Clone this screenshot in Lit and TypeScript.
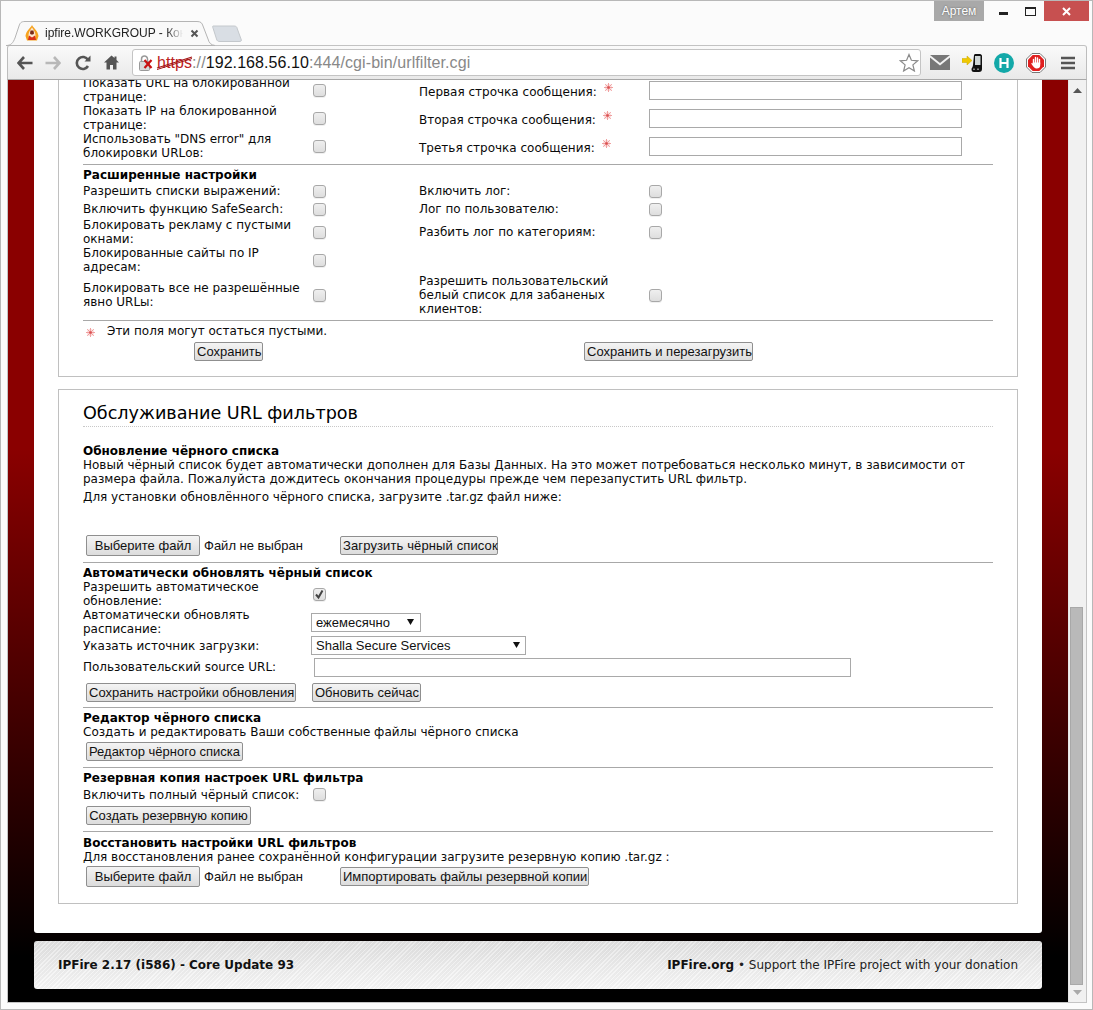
import { LitElement, html, css } from "lit";
import { customElement } from "lit/decorators.js";

const star = html`<svg class="star" width="9" height="9" viewBox="0 0 9 9"><circle cx="4.500" cy="4.500" r="3.600" fill="#fbdcdc"/><g stroke="#f0a0a0" stroke-width="1"><path d="M4.500 0v9M0 4.500h9M1.200 1.200l6.600 6.600M7.800 1.200L1.200 7.800"/></g><circle cx="4.500" cy="4.500" r="1.300" fill="#d85050"/></svg>`;

const cb = (checked = false) => html`<span class="cb" role="checkbox" aria-checked=${checked ? "true" : "false"}>${checked ? html`<svg width="11" height="11" viewBox="0 0 11 11"><path d="M2 5.500l2.500 3L8.500 1.500" fill="none" stroke="#444" stroke-width="2"/></svg>` : ""}</span>`;

@customElement("app-root")
export class AppRoot extends LitElement {
  static styles = css`
    :host { display: block; width: 1093px; height: 1010px; overflow: hidden; background: #fbfbfb; font-family: "DejaVu Sans", sans-serif; }
    * { box-sizing: border-box; }
    .window { width: 1093px; height: 1010px; border: 1px solid #b8b8b8; padding: 0 5px 6px 6px; display: flex; flex-direction: column; background: #fbfbfb; }
    .titlebar { height: 20px; flex: none; display: flex; justify-content: flex-end; align-items: flex-start; margin-right: -2px; }
    .user { width: 50px; height: 20px; background: #a9a9a9; color: #fff; font: 12px "Liberation Sans", sans-serif; display: flex; align-items: center; justify-content: center; text-shadow: 0 0 2px #555; margin-right: 6px; }
    .wbtn { width: 27px; height: 20px; display: flex; align-items: center; justify-content: center; }
    .wclose { width: 45px; height: 20px; background: #c75050; display: flex; align-items: center; justify-content: center; }
    .tabs { height: 24px; flex: none; display: flex; position: relative; z-index: 1; align-items: flex-start; }
    .tabshape { position: absolute; left: -1px; top: 0; }
    .tab { position: relative; width: 202px; height: 24px; margin-left: 4px; display: flex; align-items: center; padding: 0 0 0 13px; gap: 5px; }
    .tabtitle { width: 138px; overflow: hidden; white-space: nowrap; font: 12px "Liberation Sans", sans-serif; color: #222; -webkit-mask-image: linear-gradient(90deg, #000 88%, transparent 100%); mask-image: linear-gradient(90deg, #000 88%, transparent 100%); }
    .tabx { margin-left: 2px; }
    .newtab { margin: 4px 0 0 -1px; }
    .toolbar { height: 35px; flex: none; display: flex; align-items: center; padding: 0 0 0 9px; background: linear-gradient(#fafafa, #e9e9e9); border: 1px solid #bdbdbd; border-bottom-color: #a8a8a8; border-top-color: #c2c2c2; border-radius: 3px 3px 0 0; }
    .nav { width: 28px; height: 28px; flex: none; display: flex; align-items: center; justify-content: flex-start; }
    .nav.w30 { width: 30px; }
    .nav.w29 { width: 29px; }
    .omni { width: 789px; height: 27px; flex: none; display: flex; align-items: center; background: #fff; border: 1px solid #c4c4c4; border-radius: 3px; padding: 0 1px 0 2px; font: 16px "Liberation Sans", sans-serif; letter-spacing: 0.08px; color: #888; white-space: nowrap; }
    .url { margin-left: 4px; flex: 1; position: relative; }
    .https { color: #b22; position: relative; }
    .strike { position: absolute; left: -3px; top: -3px; }
    .host { color: #111; }
    .tools { display: flex; align-items: center; flex: none; margin-left: 3px; }
    .tool { width: 32px; height: 28px; display: flex; align-items: center; justify-content: center; }
    .viewport { flex: 1; min-height: 0; display: flex; overflow: hidden; border: 1px solid #c4c4c4; border-top: 0; }
    .page { width: 1060px; flex: none; padding: 0 26px; background: linear-gradient(#8a0000 0%, #8a0000 40%, #000 95%); height: 922px; overflow: hidden; }
    .main { display: flow-root; background: #fff; height: 853px; border-radius: 0 0 3px 3px; padding: 0 24px; font-size: 12px; line-height: 14px; color: #0a0a0a; }
    .card { display: flow-root; border: 1px solid #c0c0c0; padding: 0 24px; }
    .card.first { border-top: 0; height: 297px; }
    .first-inner { margin-top: -4px; }
    .card.second { margin-top: 12px; height: 515px; }
    .row { display: grid; grid-template-columns: 230px 106px 230px 1fr; align-items: center; }
    .r2 { grid-template-columns: 230px 1fr; }
    .h18 { height: 18px; } .h19 { height: 19px; } .h24 { height: 24px; } .h28 { height: 28px; } .h42 { height: 42px; }
    .lw { max-width: 222px; }
    .lw2 { max-width: 205px; }
    .low { padding-top: 3px; }
    .cb { display: block; width: 13px; height: 13px; background: linear-gradient(#efefef, #dedede); border: 1px solid #a8a8a8; border-radius: 3px; box-shadow: 0 1px 0 #f0f0f0; }
    .cb svg { display: block; }
    .star { margin-left: 7px; position: relative; top: -4px; vertical-align: baseline; }
    input.text { display: block; height: 19px; width: 313px; border: 1px solid #a9a9a9; background: #fff; padding: 0; margin: 0; }
    input.url-in { width: 537px; margin-left: 1px; }
    .sep { height: 1px; background: #a8a8a8; border: 0; margin: 0; }
    .m4 { margin-top: 4px; }
    .m5 { margin-top: 5px; }
    .m6 { margin-top: 6px; }
    h4 { font-size: 12px; line-height: 14px; font-weight: 700; margin: 3px 0 0; color: #000; }
    h4.t4 { margin-top: 4px; }
    .note { display: flex; align-items: center; height: 14px; margin-top: 3px; }
    .note .star { margin: 0 12px 0 3px; top: 1px; }
    .savebar { display: flex; margin-top: 4px; }
    button { font: 13px "Liberation Sans", sans-serif; height: 19px; padding: 0 2px; border: 1px solid #8f8f8f; border-radius: 2px; background: linear-gradient(#f4f4f4, #dcdcdc); color: #111; white-space: nowrap; margin: 0; }
    .save1 { margin-left: 111px; width: 69px; }
    .save2 { margin-left: 321px; width: 169px; }
    h3 { font-size: 17.6px; line-height: 22px; font-weight: 400; margin: 0; color: #000; }
    .title { padding-top: 12px; height: 37px; border-bottom: 1px dotted #c8c8c8; }
    h4.t1 { margin-top: 17px; }
    p { margin: 0; }
    .gap4 { margin-top: 4px; }
    .filebar { display: flex; align-items: center; height: 21px; margin: 31px 0 6px 3px; font: 13px "Liberation Sans", sans-serif; color: #111; }
    .filebar.last { margin: 2px 0 0 3px; }
    .filebtn { height: 21px; width: 114px; padding: 0; }
    .nofile { margin-left: 4px; width: 136px; }
    .up { width: 158px; letter-spacing: .12px; }
    .imp { width: 249px; }
    .selwrap { position: relative; display: block; height: 19px; }
    .selwrap svg { position: absolute; top: 6px; pointer-events: none; }
    .tri1 { left: 94px; }
    .tri2 { left: 200px; }
    select { appearance: none; -webkit-appearance: none; display: block; height: 19px; font: 13px "Liberation Sans", sans-serif; color: #111; background: #fff; border: 1px solid #a9a9a9; border-radius: 0; padding: 0 0 0 4px; margin-left: -2px; }
    .sel1 { width: 110px; }
    .sel2 { width: 215px; }
    .btnrow { display: flex; margin: 4px 0 0 3px; height: 19px; }
    .b-a { width: 210px; }
    .b-b { width: 109px; margin-left: 16px; }
    .b-c { margin: 3px 0 0 3px; display: block; width: 157px; }
    .b-d { margin: 2px 0 0 3px; display: block; width: 165px; }
    .scroll { width: 18px; flex: none; background: #f1f1f1; border-left: 1px solid #e6e6e6; position: relative; }
    .thumb { position: absolute; left: 1px; right: 3px; top: 527px; bottom: 17px; background: #b9b9b9; border: 1px solid #a8a8a8; }
    .arrow { position: absolute; left: 4px; }
    .a-up { top: 8px; }
    .a-down { bottom: 7px; }
    .foot { margin-top: 8px; height: 48px; border-radius: 3px; display: flex; align-items: center; justify-content: space-between; padding: 0 24px; font-size: 12px; color: #222; background: repeating-linear-gradient(135deg, rgba(255,255,255,.35) 0 1px, rgba(200,200,200,.12) 1px 3px), linear-gradient(#dedede, #f8f8f8); }
    .foot b { color: #111; font-weight: 700; }
  `;

  render() {
    return html`
    <div class="window">
      <div class="titlebar">
        <div class="user">Артем</div>
        <div class="wbtn"><svg width="9" height="8" viewBox="0 0 9 8"><rect y="5" width="9" height="3" fill="#222"/></svg></div>
        <div class="wbtn"><svg width="11" height="9" viewBox="0 0 11 9"><rect x=".5" y="1" width="10" height="7.500" fill="none" stroke="#222"/><rect width="11" height="2" fill="#222"/></svg></div>
        <div class="wclose"><svg width="10" height="9" viewBox="0 0 10 9"><path d="M1 1l7 7M8 1L1 8" stroke="#fff" stroke-width="2"/></svg></div>
      </div>
      <div class="tabs">
        <svg class="tabshape" width="210" height="25" viewBox="0 0 210 25"><path d="M0 24.500C5 24.500 7 22 9 17L13 5C14 2 15 .5 19 .5H191C195 .5 196 2 197 5L202 18C203 22 205 24 209 24.500Z" fill="#f9f9f9" stroke="#b4b4b4"/></svg>
        <div class="tab">
          <svg width="16" height="16" viewBox="0 0 16 16"><path d="M8 0C9.500 3 14 6 14.500 11L13 15.500H3L1.500 11C2 6 6.500 3 8 0Z" fill="#f6a21e"/><path d="M8 2.500C9.500 5 11.500 7 11.500 10L11 14H5L4.500 10C4.500 7 6.500 5 8 2.500Z" fill="#fbe6cf"/><path d="M6.500 5.500H9.500L10 8.500L9 9.500H7L6 8.500Z" fill="#7a2a1a"/><path d="M5 10.500L8 12.500L11 10.500L12 15H4Z" fill="#d7301a"/></svg>
          <span class="tabtitle">ipfire.WORKGROUP - Кон</span>
          <svg class="tabx" width="9" height="9" viewBox="0 0 9 9"><path d="M1.500 1.500l6 6M7.500 1.500l-6 6" stroke="#555" stroke-width="2"/></svg>
        </div>
        <svg class="newtab" width="31" height="18" viewBox="0 0 31 18"><path d="M1 1H22C24 1 25 2 25 3L29 14C30 16 29 16.500 27 16.500H8C6 16.500 5 16 4.500 14L1 3C.5 2 .5 1 1 1Z" fill="#d9dee4" stroke="#c4c8cc"/></svg>
      </div>
      <div class="toolbar">
        <div class="nav"><svg width="16" height="14" viewBox="0 0 16 14"><path d="M7 1L1.500 7L7 13M2 7H15.500" fill="none" stroke="#555" stroke-width="2.600"/></svg></div>
        <div class="nav w30"><svg width="16" height="14" viewBox="0 0 16 14"><path d="M9 1L14.500 7L9 13M14 7H.5" fill="none" stroke="#b8b8b8" stroke-width="2.600"/></svg></div>
        <div class="nav w29"><svg width="16" height="16" viewBox="0 0 16 16"><path d="M13 11A6 6 0 1 1 13 5" fill="none" stroke="#555" stroke-width="2.600"/><path d="M9.500 6.500H15.500V.5Z" fill="#555"/></svg></div>
        <div class="nav"><svg width="15" height="15" viewBox="0 0 15 15"><path d="M7.500 .5L0 7.500H2.500V14.500H6V10H9V14.500H12.500V7.500H15L12.500 5V1.500H10.500V3Z" fill="#555"/></svg></div>
        <div class="omni">
          <svg width="18" height="18" viewBox="0 0 18 18"><rect x="4.500" y="7.500" width="10" height="9" rx="1" fill="#d8d8d8" stroke="#999"/><path d="M6.500 7.500V5A3 3 0 0 1 12.500 5V7.500" fill="none" stroke="#999" stroke-width="1.500"/><path d="M9.500 6l7 8M16.500 6l-7 8" stroke="#c81010" stroke-width="2.200"/></svg>
          <span class="url"><span class="https">https<svg class="strike" width="40" height="22" viewBox="0 0 40 22"><path d="M3 17L38 6" stroke="#a31515" stroke-width="1.200"/><path d="M3 18.500L38 7.500" stroke="#a31515" stroke-width="1"/></svg></span>://<span class="host">192.168.56.10</span>:444/cgi-bin/urlfilter.cgi</span>
          <svg width="20" height="19" viewBox="0 0 20 19"><path d="M10 1.500L12.400 7.300L18.700 7.800L13.900 11.900L15.400 18L10 14.800L4.600 18L6.100 11.900L1.300 7.800L7.600 7.300Z" fill="#fff" stroke="#8a8a8a" stroke-width="1.200"/></svg>
        </div>
        <div class="tools">
          <div class="tool"><svg width="20" height="15" viewBox="0 0 20 15"><path d="M0 0H20L10 8Z" fill="#777"/><path d="M0 2.500L10 10.500L20 2.500V15H0Z" fill="#777"/></svg></div>
          <div class="tool"><svg width="20" height="18" viewBox="0 0 20 18"><path d="M0 4.500H5V2L10 6.500L5 11V8.500H0Z" fill="#f0c800" stroke="#c9a800" stroke-width=".5"/><path d="M12 1C12 .5 13 0 14 0H18C19 0 20 1 20 2V15C20 17 19 18 17 18H12C10 18 9.500 17 9.500 15C9.500 14 11 13 11 11Z" fill="#111"/><rect x="13" y="2" width="5.500" height="9" fill="#cfd6d6"/><rect x="11" y="14.500" width="2" height="1.500" fill="#888"/><rect x="15" y="14.500" width="2" height="1.500" fill="#888"/></svg></div>
          <div class="tool"><svg width="20" height="20" viewBox="0 0 20 20"><circle cx="10" cy="10" r="10" fill="#13a8a8"/><path d="M6.500 5V15M13.500 5V15M6.500 10H13.500" stroke="#fff" stroke-width="2.200" fill="none"/></svg></div>
          <div class="tool"><svg width="20" height="20" viewBox="0 0 20 20"><path d="M6 .5H14L19.500 6V14L14 19.500H6L.5 14V6Z" fill="#fff" stroke="#777"/><path d="M6.700 2H13.300L18 6.700V13.300L13.300 18H6.700L2 13.300V6.700Z" fill="#e01f1f"/><path d="M7.500 10V6.500M9.500 10V4.500M11.500 10V5M13.500 11V6.500" fill="none" stroke="#fff" stroke-width="1.400" stroke-linecap="round"/><path d="M6.800 9.500H14.200V12.500C14.200 14.500 13 15.500 10.800 15.500C8.800 15.500 8 14.500 5.500 11C5 10 6 9.500 6.800 10.500Z" fill="#fff"/></svg></div>
          <div class="tool"><svg width="14" height="14" viewBox="0 0 14 14"><path d="M0 2H14M0 7H14M0 12H14" stroke="#555" stroke-width="2.600"/></svg></div>
        </div>
      </div>
      <div class="viewport">
        <div class="page">
          <div class="main">
            <div class="card first">
              <div class="first-inner">
                <div class="row h28"><div class="lw">Показать URL на блокированной странице:</div>${cb()}<div class="low">Первая строчка сообщения:${star}</div><input class="text" /></div>
                <div class="row h28"><div class="lw">Показать IP на блокированной странице:</div>${cb()}<div class="low">Вторая строчка сообщения:${star}</div><input class="text" /></div>
                <div class="row h28"><div class="lw">Использовать "DNS error" для блокировки URLов:</div>${cb()}<div class="low">Третья строчка сообщения:${star}</div><input class="text" /></div>
              </div>
              <hr class="sep m4" />
              <h4>Расширенные настройки</h4>
              <div class="row h18"><div>Разрешить списки выражений:</div>${cb()}<div>Включить лог:</div>${cb()}</div>
              <div class="row h18"><div>Включить функцию SafeSearch:</div>${cb()}<div>Лог по пользователю:</div>${cb()}</div>
              <div class="row h28"><div class="lw">Блокировать рекламу с пустыми окнами:</div>${cb()}<div>Разбить лог по категориям:</div>${cb()}</div>
              <div class="row h28"><div class="lw">Блокированные сайты по IP адресам:</div>${cb()}<div></div><div></div></div>
              <div class="row h42"><div class="lw">Блокировать все не разрешённые явно URLы:</div>${cb()}<div class="lw2">Разрешить пользовательский белый список для забаненых клиентов:</div>${cb()}</div>
              <hr class="sep m4" />
              <div class="note">${star}<span>Эти поля могут остаться пустыми.</span></div>
              <div class="savebar"><button class="save1">Сохранить</button><button class="save2">Сохранить и перезагрузить</button></div>
            </div>
            <div class="card second">
              <div class="title"><h3>Обслуживание URL фильтров</h3></div>
              <h4 class="t1">Обновление чёрного списка</h4>
              <p>Новый чёрный список будет автоматически дополнен для Базы Данных. На это может потребоваться несколько минут, в зависимости от размера файла. Пожалуйста дождитесь окончания процедуры прежде чем перезапустить URL фильтр.</p>
              <p class="gap4">Для установки обновлённого чёрного списка, загрузите .tar.gz файл ниже:</p>
              <div class="filebar"><button class="filebtn">Выберите файл</button><span class="nofile">Файл не выбран</span><button class="up">Загрузить чёрный список</button></div>
              <hr class="sep" />
              <h4>Автоматически обновлять чёрный список</h4>
              <div class="r2 row h28"><div class="lw">Разрешить автоматическое обновление:</div>${cb(true)}</div>
              <div class="r2 row h28"><div class="lw">Автоматически обновлять расписание:</div><span class="selwrap"><select class="sel1"><option>ежемесячно</option></select><svg class="tri1" width="7" height="6" viewBox="0 0 7 6"><path d="M0 0H7L3.500 6Z" fill="#111"/></svg></span></div>
              <div class="r2 row h19"><div>Указать источник загрузки:</div><span class="selwrap"><select class="sel2"><option>Shalla Secure Services</option></select><svg class="tri2" width="7" height="6" viewBox="0 0 7 6"><path d="M0 0H7L3.500 6Z" fill="#111"/></svg></span></div>
              <div class="r2 row h24"><div>Пользовательский source URL:</div><input class="text url-in" /></div>
              <div class="btnrow"><button class="b-a">Сохранить настройки обновления</button><button class="b-b">Обновить сейчас</button></div>
              <hr class="sep m5" />
              <h4>Редактор чёрного списка</h4>
              <p>Создать и редактировать Ваши собственные файлы чёрного списка</p>
              <button class="b-c">Редактор чёрного списка</button>
              <hr class="sep m6" />
              <h4>Резервная копия настроек URL фильтра</h4>
              <div class="r2 row h19"><div>Включить полный чёрный список:</div>${cb()}</div>
              <button class="b-d">Создать резервную копию</button>
              <hr class="sep m6" />
              <h4 class="t4">Восстановить настройки URL фильтров</h4>
              <p>Для восстановления ранее сохранённой конфигурации загрузите резервную копию .tar.gz :</p>
              <div class="filebar last"><button class="filebtn">Выберите файл</button><span class="nofile">Файл не выбран</span><button class="imp">Импортировать файлы резервной копии</button></div>
            </div>
          </div>
          <div class="foot"><b>IPFire 2.17 (i586) - Core Update 93</b><span><b>IPFire.org</b> • Support the IPFire project with your donation</span></div>
        </div>
        <div class="scroll">
          <svg class="arrow a-up" width="9" height="5" viewBox="0 0 9 5"><path d="M0 5L4.500 0L9 5Z" fill="#555"/></svg>
          <div class="thumb"></div>
          <svg class="arrow a-down" width="9" height="5" viewBox="0 0 9 5"><path d="M0 0L4.500 5L9 0Z" fill="#aaa"/></svg>
        </div>
      </div>
    </div>`;
  }
}
